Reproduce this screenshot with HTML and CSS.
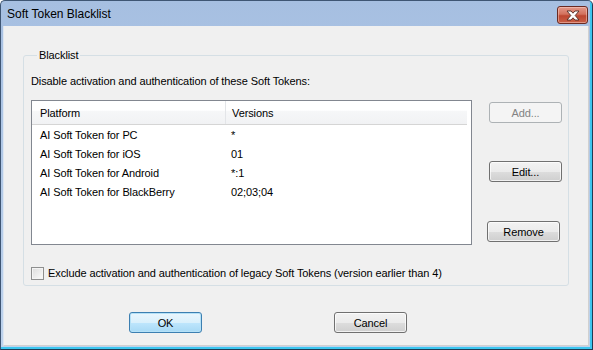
FILE: index.html
```html
<!DOCTYPE html>
<html lang="en">
<head>
  <meta charset="UTF-8" />
  <title>Soft Token Blacklist</title>
  <link rel="stylesheet" href="styles.css">
</head>
<body>

  <div class="window">
    <!-- Title bar -->
    <div class="titlebar">
      <span class="title">Soft Token Blacklist</span>
      <button class="close" title="Close">
        <svg width="16" height="11" viewBox="0 0 16 11">
          <path d="M2 1 L6 1 L8 3.2 L10 1 L14 1 L10.2 5.5 L14 10 L10 10 L8 7.8 L6 10 L2 10 L5.8 5.5 Z"
                fill="#fff" stroke="#4e2a25" stroke-width="0.9" stroke-linejoin="round" />
        </svg>
      </button>
    </div>

    <!-- Client area -->
    <div class="client">
      <fieldset class="group">
        <legend>Blacklist</legend>
        <p class="desc">Disable activation and authentication of these Soft Tokens:</p>

        <div class="list-row">
          <div class="listview">
            <div class="lv-header">
              <div class="col-platform">Platform</div>
              <div class="col-versions">Versions</div>
            </div>
            <div class="lv-row">
              <div class="col-platform">AI Soft Token for PC</div>
              <div class="col-versions">*</div>
            </div>
            <div class="lv-row">
              <div class="col-platform">AI Soft Token for iOS</div>
              <div class="col-versions">01</div>
            </div>
            <div class="lv-row">
              <div class="col-platform">AI Soft Token for Android</div>
              <div class="col-versions">*:1</div>
            </div>
            <div class="lv-row">
              <div class="col-platform">AI Soft Token for BlackBerry</div>
              <div class="col-versions">02;03;04</div>
            </div>
          </div>

          <div class="side-buttons">
            <button class="btn" disabled>Add...</button>
            <button class="btn">Edit...</button>
            <button class="btn btn-shift">Remove</button>
          </div>
        </div>

        <label class="check">
          <span class="check-box"></span>
          Exclude activation and authentication of legacy Soft Tokens (version earlier than 4)
        </label>
      </fieldset>

      <div class="footer">
        <button class="btn btn-default">OK</button>
        <button class="btn">Cancel</button>
      </div>
    </div>
  </div>

</body>
</html>
```

FILE: styles.css
```css
body {
  margin: 0;
  font-family: "Liberation Sans", Arial, sans-serif;
  font-size: 11px;
  letter-spacing: -0.1px;
  color: #000;
  background: #fff;
}

/* Window frame */
.window {
  width: 593px;
  height: 350px;
  box-sizing: border-box;
  display: flex;
  flex-direction: column;
  background: linear-gradient(#a6bfe1, #bed3ed);
  border: 1px solid #3f5674;
  border-right-color: #1f3b55;
  border-bottom-color: #1f3b55;
  border-radius: 5px 5px 0 0;
  box-shadow: inset -2px -2px 0 #3cc6ef;
}

.titlebar {
  height: 25px;
  display: flex;
  align-items: center;
  justify-content: space-between;
  padding: 0 4px 0 6px;
}
.title {
  font-size: 12px;
  letter-spacing: 0;
  color: #000;
  margin-top: 1px;
}
.close {
  width: 31px;
  height: 18px;
  margin-top: 3px;
  padding: 0;
  display: flex;
  align-items: center;
  justify-content: center;
  border: 1px solid #6a2a22;
  border-radius: 3px;
  background: linear-gradient(#e3998a 0%, #d3715d 45%, #bd4630 55%, #c85f47 100%);
  box-shadow: inset 0 0 0 1px rgba(255, 220, 210, 0.45);
}

.client {
  flex: 1;
  margin: 0 3px 3px 2px;
  background: #f0f0f0;
  border-left: 1px solid #dde6f1;
  border-right: 1px solid #d0d0d0;
  border-bottom: 1px solid #d0d0d0;
  display: flex;
  flex-direction: column;
}

/* Group box */
.group {
  margin: 23px 19px 0 19px;
  padding: 13px 6px 5px 7px;
  border: 1px solid #d5dfe5;
  border-radius: 3px;
  min-width: 0;
}
.group legend {
  padding: 0 2px;
  margin-left: 6px;
  line-height: 13px;
}
.desc {
  margin: 0;
  line-height: 13px;
}

.list-row {
  display: flex;
  margin-top: 12px;
}

/* List view */
.listview {
  width: 440px;
  height: 143px;
  background: #fff;
  border: 1px solid #828790;
}
.lv-header {
  display: flex;
  height: 23px;
  align-items: center;
  border-bottom: 1px solid #d5d5d5;
  background: linear-gradient(#fff 0%, #fff 40%, #f6f7f8 45%, #f1f2f4 100%);
  margin-right: 4px;
}
.lv-header .col-platform {
  border-right: 1px solid #e3e5e8;
  align-self: stretch;
  display: flex;
  align-items: center;
}
.lv-row {
  display: flex;
  height: 19px;
  align-items: center;
}
.col-platform {
  width: 185px;
  padding-left: 8px;
}
.col-versions {
  padding-left: 6px;
}

/* Buttons */
.side-buttons {
  display: flex;
  flex-direction: column;
  gap: 38px;
  margin-left: 17px;
  padding-top: 2px;
}
.btn {
  width: 73px;
  height: 21px;
  padding: 0;
  font-family: inherit;
  font-size: 11px;
  letter-spacing: inherit;
  color: #000;
  border: 1px solid #707070;
  border-radius: 3px;
  background: linear-gradient(#f2f2f2 0%, #ebebeb 50%, #dddddd 51%, #cfcfcf 100%);
  box-shadow: inset 0 0 0 1px rgba(255, 255, 255, 0.7);
}
.btn:disabled {
  color: #838383;
  border-color: #adb2b5;
  background: #f4f4f4;
  box-shadow: none;
}
.btn-shift {
  margin-left: -2px;
  margin-top: 1px;
}
.btn-default {
  border-color: #3c7fb1;
  background: linear-gradient(#eaf6fd 0%, #d9f0fc 50%, #bee6fd 51%, #a7d9f5 100%);
  box-shadow: inset 0 0 0 1px #b5e1f7;
}

/* Checkbox */
.check {
  display: flex;
  align-items: center;
  gap: 4px;
  margin-top: 22px;
  line-height: 13px;
}
.check-box {
  width: 11px;
  height: 11px;
  border: 1px solid #8e8f8f;
  background: linear-gradient(135deg, #dcdcdc, #fbfbfb);
  box-shadow: inset 0 0 0 1px #f4f4f4;
}

/* Dialog buttons */
.footer {
  display: flex;
  gap: 132px;
  margin-top: 26px;
  padding-left: 125px;
}
```
